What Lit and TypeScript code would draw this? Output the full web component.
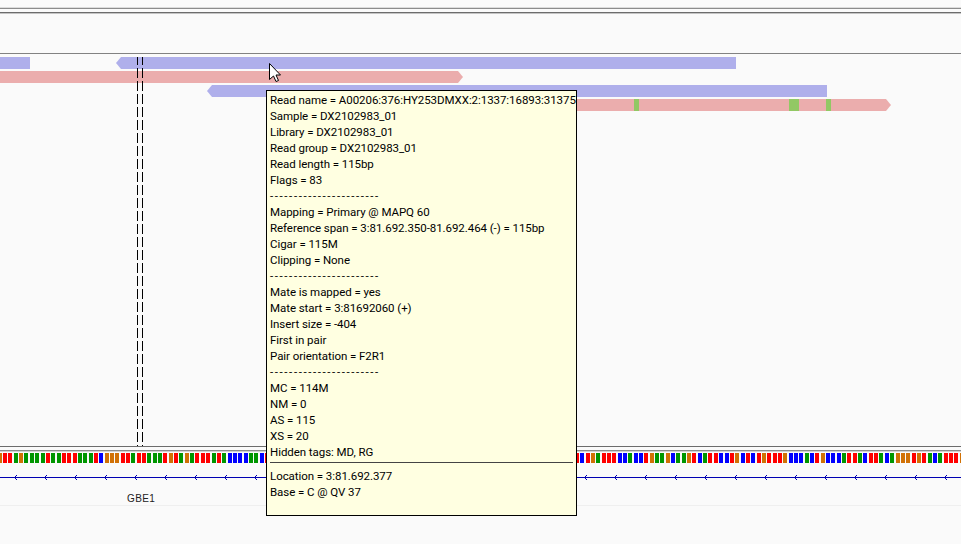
import { html, css, LitElement } from 'lit';
import { customElement } from 'lit/decorators.js';

interface Read {
	start: number;
	end: number;
	kind: 'neg' | 'pos';
	tip?: 'left' | 'right';
	mismatches?: [number, number][];
}

const ROWS: Read[][] = [
	[
		{ start: 0, end: 30, kind: 'neg' },
		{ start: 116, end: 736, kind: 'neg', tip: 'left' },
	],
	[{ start: 0, end: 463, kind: 'pos', tip: 'right' }],
	[{ start: 207, end: 827, kind: 'neg', tip: 'left' }],
	[
		{
			start: 300,
			end: 891,
			kind: 'pos',
			tip: 'right',
			mismatches: [[634, 5], [789, 10], [826, 5]],
		},
	],
];

// bases left of the popup, the part it hides, and the part right of it
const SEQUENCE =
	'GTTAGAAAATAATTTAAATCGGGTTATTAAATGTAGATTTATACCCCAAC' +
	'TTCAGGATAC'.repeat(5) + 'TTCAGGATT' +
	'CTGATTTCCACCTGAAGCAAGTCATTCCTGCTCTGTTTGCCCACTGCCCATTACTTACAGGGTGTACATTTG';

const DASHES = '-----------------------';

const POPUP_LINES = [
	'Read name = A00206:376:HY253DMXX:2:1337:16893:31375',
	'Sample = DX2102983_01',
	'Library = DX2102983_01',
	'Read group = DX2102983_01',
	'Read length = 115bp',
	'Flags = 83',
	DASHES,
	'Mapping = Primary @ MAPQ 60',
	'Reference span = 3:81.692.350-81.692.464 (-) = 115bp',
	'Cigar = 115M',
	'Clipping = None',
	DASHES,
	'Mate is mapped = yes',
	'Mate start = 3:81692060 (+)',
	'Insert size = -404',
	'First in pair',
	'Pair orientation = F2R1',
	DASHES,
	'MC = 114M',
	'NM = 0',
	'AS = 115',
	'XS = 20',
	'Hidden tags: MD, RG',
];

@customElement('app-root')
export class AppRoot extends LitElement {
	static styles = css`
		:host {
			display: block;
			position: relative;
			width: 961px;
			height: 544px;
			overflow: hidden;
			background: #fafafa;
			font-family: 'Liberation Sans', Arial, sans-serif;
		}
		.header {
			border-bottom: 1px solid #828282;
			padding-top: 8px;
			height: 45px;
		}
		.rule-a {
			height: 1px;
			background: #8c8c8c;
			box-shadow: 0 -1px 0 #dcdcdc;
		}
		.rule-b {
			height: 1px;
			margin-top: 3px;
			background: #6c6c6c;
			box-shadow: 0 1px 0 #c4c4c4;
		}
		.tracks {
			position: relative;
			height: 389px;
			padding-top: 3px;
			display: flex;
			flex-direction: column;
			gap: 2px;
		}
		.row {
			display: flex;
			height: 12px;
		}
		.read {
			position: relative;
			flex: none;
			height: 12px;
		}
		.read.neg {
			background: #afafeb;
		}
		.read.pos {
			background: #ebadad;
		}
		.read.left {
			clip-path: polygon(5px 0, 100% 0, 100% 100%, 5px 100%, 0 50%);
		}
		.read.right {
			clip-path: polygon(0 0, calc(100% - 5px) 0, 100% 50%, calc(100% - 5px) 100%, 0 100%);
		}
		.mismatch {
			position: absolute;
			top: 0;
			bottom: 0;
			background: #92c864;
		}
		.center-line {
			position: absolute;
			top: 3px;
			bottom: 0;
			width: 1px;
			background: repeating-linear-gradient(
				to bottom,
				#000 0 8px,
				transparent 8px 11px,
				#000 11px 13px
			);
		}
		.center-line.a {
			left: 137px;
		}
		.center-line.b {
			left: 142px;
		}
		.sequence-panel {
			height: 17px;
		}
		.rule-c {
			height: 1px;
			background: #6c6c6c;
		}
		.rule-d {
			height: 1px;
			margin-top: 3px;
			background: #8c8c8c;
			box-shadow: 0 1px 0 #d0d0d0;
		}
		.bases {
			display: grid;
			grid-auto-flow: column;
			grid-auto-columns: 5.345px;
			margin-top: 2px;
			margin-left: -2.245px;
			height: 10px;
		}
		.base {
			width: 4px;
			height: 10px;
		}
		.base.A {
			background: #009600;
		}
		.base.C {
			background: #0000ff;
		}
		.base.G {
			background: #d17105;
		}
		.base.T {
			background: #ff0000;
		}
		.gene-panel {
			height: 42px;
			border-bottom: 1px solid #efefef;
			display: flex;
			flex-direction: column;
			align-items: flex-start;
		}
		.gene-line {
			display: block;
			flex: none;
			margin-top: 11px;
			shape-rendering: crispEdges;
		}
		.gene-name {
			margin: 12px 0 0 127px;
			font-size: 10px;
			line-height: 12px;
			letter-spacing: 0.4px;
			color: #222;
		}
		.popup {
			position: absolute;
			left: 266px;
			top: 90px;
			width: 303px;
			height: 422px;
			padding: 1px 3px;
			border: 1px solid #000;
			background: #ffffe1;
			color: #000;
			font-family: Roboto, sans-serif;
			font-size: 11.5px;
			letter-spacing: -0.06px;
			line-height: 16px;
			white-space: nowrap;
			box-sizing: content-box;
		}
		.popup .dashes {
			letter-spacing: 1.6px;
		}
		.popup hr {
			height: 1px;
			margin: 2px 0 5px;
			border: 0;
			background: #444;
		}
		.cursor {
			position: absolute;
			left: 269px;
			top: 63px;
		}
	`;

	private renderRow(row: Read[]) {
		let x = 0;
		return html`<div class="row">
			${row.map((r) => {
				const gap = r.start - x;
				x = r.end;
				const cls = `read ${r.kind} ${r.tip ?? ''}`;
				return html`<div class=${cls} style="margin-left:${gap}px;width:${r.end - r.start}px">
					${(r.mismatches ?? []).map(
						([mx, w]) => html`<div class="mismatch" style="left:${mx - r.start}px;width:${w}px"></div>`
					)}
				</div>`;
			})}
		</div>`;
	}

	private renderGeneLine() {
		const ticks: number[] = [];
		for (let x = 15; x < 961; x += 30) ticks.push(x);
		const d = ticks.map((x) => `M${x + 1.5} 1V2M${x + 0.5} 2V5M${x + 1.5} 5V6`).join('');
		return html`<svg class="gene-line" width="961" height="7" viewBox="0 0 961 7">
			<path d="M0 3.5H961" stroke="#0000b2" stroke-width="1" fill="none"></path>
			<path d=${d} stroke="#0000b2" stroke-width="1" fill="none"></path>
		</svg>`;
	}

	render() {
		return html`
			<div class="header">
				<div class="rule-a"></div>
				<div class="rule-b"></div>
			</div>
			<div class="tracks">
				${ROWS.map((row) => this.renderRow(row))}
				<div class="center-line a"></div>
				<div class="center-line b"></div>
			</div>
			<div class="sequence-panel">
				<div class="rule-c"></div>
				<div class="rule-d"></div>
				<div class="bases">
					${[...SEQUENCE].map((b) => html`<div class="base ${b}"></div>`)}
				</div>
			</div>
			<div class="gene-panel">
				${this.renderGeneLine()}
				<div class="gene-name">GBE1</div>
			</div>
			<div class="popup">
				${POPUP_LINES.map((l) => html`<div class=${l === DASHES ? 'dashes' : ''}>${l}</div>`)}
				<hr />
				<div>Location = 3:81.692.377</div>
				<div>Base = C @ QV 37</div>
			</div>
			<svg class="cursor" width="13" height="20" viewBox="0 0 13 20">
				<path
					d="M0.5 0.5V16.5L4.5 13L7 18.5L9.5 17.5L7 12H11.5Z"
					fill="#fff"
					stroke="#000"
					stroke-width="1"
				></path>
			</svg>
		`;
	}
}
